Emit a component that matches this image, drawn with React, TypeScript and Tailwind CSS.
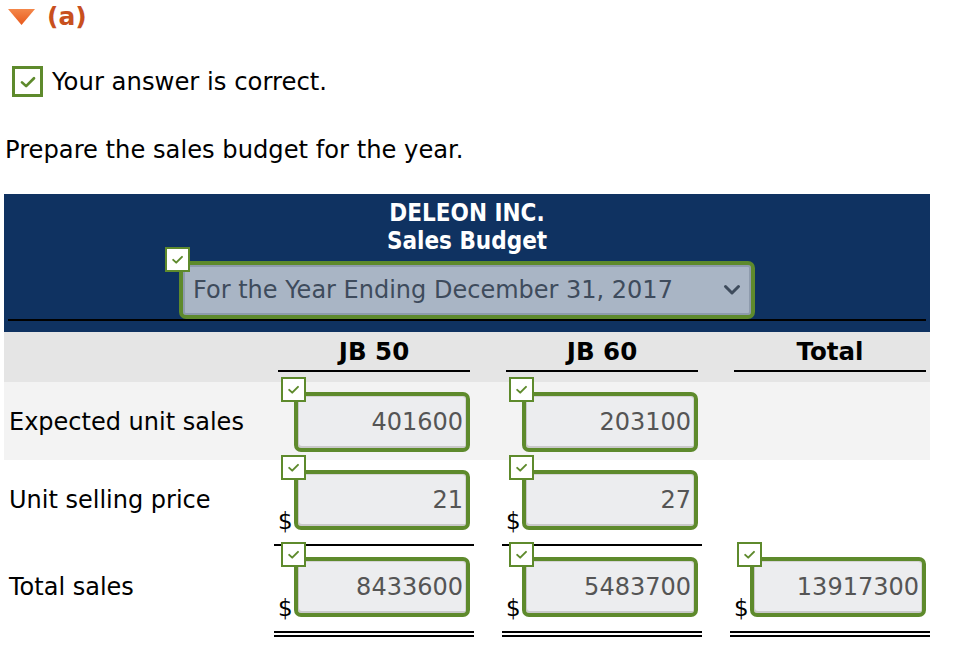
import React from 'react';

const FONT = { fontFamily: "'DejaVu Sans', Verdana, sans-serif" };

function CheckMark({ size = 25 }: { size?: number }) {
  return (
    <svg viewBox="0 0 24 24" width={size * 0.6} height={size * 0.6} fill="none" aria-hidden="true">
      <path
        d="M4 12.5L9.5 17.5L20 7"
        stroke="#5e8a2c"
        strokeWidth="3.6"
        strokeLinecap="round"
        strokeLinejoin="round"
      />
    </svg>
  );
}

function SmallCheck({ className }: { className?: string }) {
  return (
    <div
      className={`absolute z-10 flex h-[25px] w-[25px] items-center justify-center border-2 border-[#5e8a2c] bg-white ${className ?? ''}`}
    >
      <CheckMark size={22} />
    </div>
  );
}

function AmountCell({
  value,
  dollar,
  underline,
}: {
  value: string;
  dollar?: boolean;
  underline?: 'single' | 'double';
}) {
  const border =
    underline === 'single'
      ? 'border-b-2 border-black'
      : underline === 'double'
        ? 'border-b-[6px] border-double border-black'
        : '';
  return (
    <div className={`relative w-[200px] self-stretch ${border}`}>
      <SmallCheck className="left-[7px] top-[-15px]" />
      {dollar ? (
        <span className="absolute left-[4px] top-[39px] text-[23px] leading-[24px] text-black" style={FONT}>
          $
        </span>
      ) : null}
      <div
        className="ml-[20px] flex h-[60px] w-[176px] items-center justify-end rounded-[7px] border-4 border-[#5e8a2c] bg-[#ecedef] pr-[3px] text-[24px] leading-[28px] text-[#555] shadow-[inset_1px_-2px_0_#c9c9c9,inset_-1px_1px_0_#d4d4d4]"
        style={FONT}
      >
        {value}
      </div>
    </div>
  );
}

function Row({
  label,
  bg,
  height,
  pt,
  children,
}: {
  label: string;
  bg: string;
  height: string;
  pt: string;
  children: React.ReactNode;
}) {
  return (
    <div className={`flex ${bg} ${height} ${pt}`}>
      <div className="flex h-[60px] w-[270px] items-center pl-[5px] text-[24px] leading-[28px] text-black" style={FONT}>
        {label}
      </div>
      {children}
    </div>
  );
}

export default function App() {
  return (
    <div className="h-[648px] w-[956px] overflow-hidden bg-white px-[4px]" style={FONT}>
      <div className="flex h-[34px] items-center gap-[12px] pl-[4px]">
        <svg width="27" height="16" viewBox="0 0 27 16" aria-hidden="true">
          <defs>
            <linearGradient id="tri" x1="0" y1="0" x2="0" y2="1">
              <stop offset="0" stopColor="#f4874a" />
              <stop offset="1" stopColor="#e8591c" />
            </linearGradient>
          </defs>
          <path d="M0 0H27L13.5 16Z" fill="url(#tri)" />
        </svg>
        <span className="text-[25px] font-bold leading-[30px] text-[#c8501e]">(a)</span>
      </div>

      <div className="mt-[32px] flex h-[31px] items-center gap-[9px] pl-[8px]">
        <div className="flex h-[31px] w-[31px] items-center justify-center border-[3px] border-[#5e8a2c] bg-white">
          <CheckMark size={30} />
        </div>
        <span className="text-[24.3px] leading-[28px] text-black">Your answer is correct.</span>
      </div>

      <p className="mt-[39px] pl-[1px] text-[24.2px] leading-[28px] text-black">
        Prepare the sales budget for the year.
      </p>

      <div className="mt-[30px] w-[926px]">
        <div className="bg-[#0f3261] px-[4px] pt-[5px] pb-[11px]">
          <div
            className="text-center text-[24px] font-bold leading-[28px] text-white"
            style={{ fontFamily: "'DejaVu Sans Condensed', 'DejaVu Sans', Tahoma, sans-serif", fontStretch: 'condensed' }}
          >
            <div>DELEON INC.</div>
            <div>Sales Budget</div>
          </div>
          <div className="mt-[6px] flex justify-center border-b-2 border-black">
            <div className="relative">
              <SmallCheck className="left-[-14px] top-[-14px]" />
              <div className="flex h-[58px] w-[576px] items-center justify-between rounded-[7px] border-4 border-[#5e8a2c] bg-[#a9b5c5] pl-[10px] pr-[10px] text-[24px] leading-[28px] text-[#3e4b5c] shadow-[inset_0_0_0_2px_#8e9bad]">
                <span>For the Year Ending December 31, 2017</span>
                <svg width="18" height="12" viewBox="0 0 18 12" aria-hidden="true">
                  <path d="M2.5 2.5L9 9L15.5 2.5" stroke="#3e4b5c" strokeWidth="3" fill="none" strokeLinecap="round" strokeLinejoin="round" />
                </svg>
              </div>
            </div>
          </div>
        </div>

        <div className="flex h-[50px] bg-[#e5e5e5] pt-[6px]">
          <div className="w-[270px]" />
          {['JB 50', 'JB 60', 'Total'].map((h, i) => (
            <div key={h} className={`w-[200px] px-[4px] ${i > 0 ? 'ml-[28px]' : ''}`}>
              <div className="h-[34px] border-b-2 border-black text-center text-[24.5px] font-bold leading-[28px] text-black">
                {h}
              </div>
            </div>
          ))}
        </div>

        <Row label="Expected unit sales" bg="bg-[#f3f3f3]" height="h-[78px]" pt="pt-[10px]">
          <AmountCell value="401600" />
          <div className="ml-[28px]">
            <AmountCell value="203100" />
          </div>
        </Row>

        <Row label="Unit selling price" bg="bg-white" height="h-[86px]" pt="pt-[10px]">
          <AmountCell value="21" dollar underline="single" />
          <div className="ml-[28px] flex">
            <AmountCell value="27" dollar underline="single" />
          </div>
        </Row>

        <Row label="Total sales" bg="bg-white" height="h-[91px]" pt="pt-[11px]">
          <AmountCell value="8433600" dollar underline="double" />
          <div className="ml-[28px] flex">
            <AmountCell value="5483700" dollar underline="double" />
          </div>
          <div className="ml-[28px] flex">
            <AmountCell value="13917300" dollar underline="double" />
          </div>
        </Row>
      </div>
    </div>
  );
}
